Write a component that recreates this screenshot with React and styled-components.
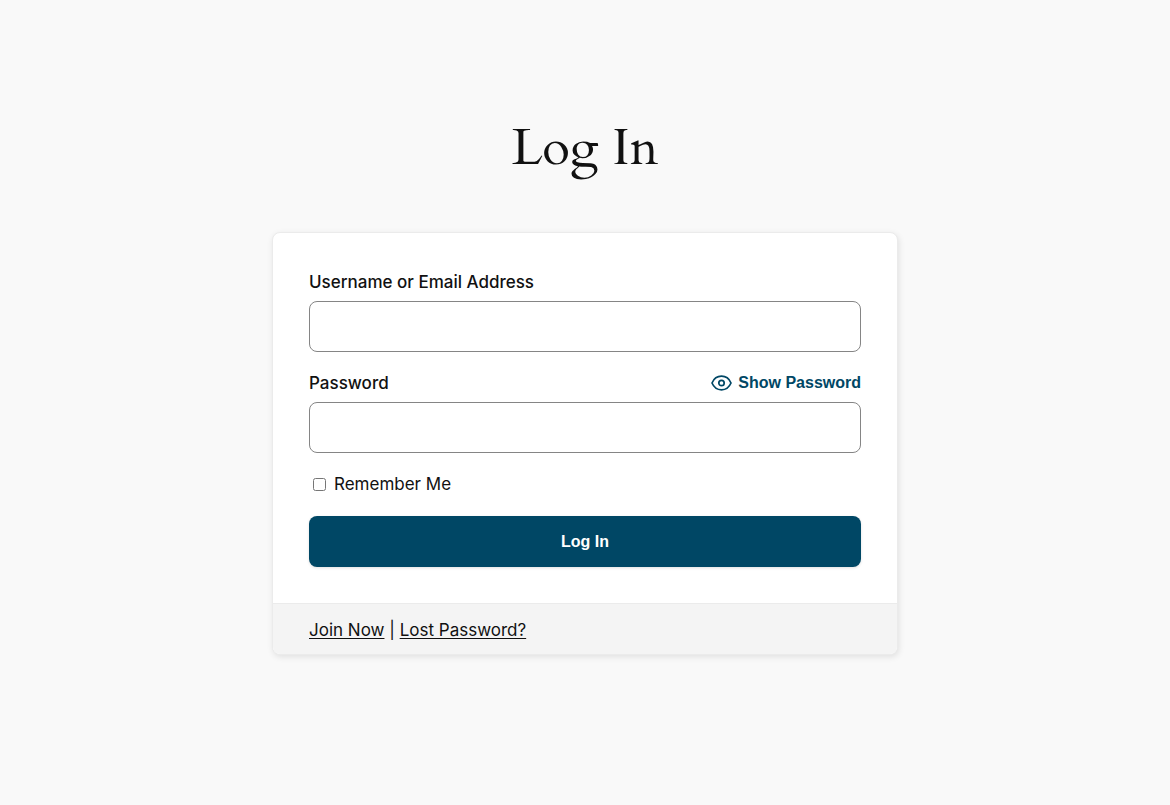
import React, { useState } from "react";
import styled, { createGlobalStyle } from "styled-components";

const GlobalStyle = createGlobalStyle`
  *, *::before, *::after { box-sizing: border-box; }
  body {
    margin: 0;
    background: #f9f9f9;
    color: #111;
    font: 400 17px/24px Inter, "Liberation Sans", sans-serif;
  }
`;

const Page = styled.main`
  display: flex;
  flex-direction: column;
  align-items: center;
  min-height: 100vh;
  padding: 112px 24px 48px;
`;

const Title = styled.h1`
  margin: 0 0 48px;
  color: #111;
  font: 400 51px/72px Cardo, "EB Garamond", "Liberation Serif", serif;
`;

const Card = styled.form`
  width: 100%;
  max-width: 626px;
  overflow: hidden;
  border: 1px solid #ebebeb;
  border-radius: 8px;
  background: #fff;
  box-shadow: 1px 2px 6px rgba(0, 0, 0, 0.1);
`;

const Fields = styled.div`
  display: flex;
  flex-direction: column;
  gap: 19px;
  padding: 37px 36px 36px;
`;

const Field = styled.div`
  display: flex;
  flex-direction: column;
  gap: 7px;
`;

const FieldHead = styled.div`
  display: flex;
  align-items: center;
  justify-content: space-between;
`;

const Label = styled.label`
  font-weight: 500;
`;

const TextInput = styled.input`
  width: 100%;
  height: 51px;
  padding: 0 16px;
  border: 1px solid #858585;
  border-radius: 8px;
  background: #fff;
  color: inherit;
  font: inherit;
`;

const ToggleButton = styled.button`
  display: flex;
  align-items: center;
  gap: 6px;
  padding: 0;
  border: 0;
  background: none;
  color: #004765;
  font: 700 16px/24px "Liberation Sans", sans-serif;
  cursor: pointer;
`;

const Remember = styled.label`
  display: flex;
  align-items: center;
  gap: 8px;
  padding-left: 4px;
  line-height: 25px;
`;

const Checkbox = styled.input`
  width: 13px;
  height: 13px;
  margin: 0;
`;

const Submit = styled.button`
  height: 51px;
  border: 0;
  border-radius: 8px;
  background: #004765;
  color: #fff;
  font: 700 16px/24px "Liberation Sans", sans-serif;
  box-shadow: 0 1px 3px rgba(0, 0, 0, 0.12);
  cursor: pointer;
`;

const Footer = styled.nav`
  padding: 14px 36px 12px;
  border-top: 1px solid #ebebeb;
  background: #f4f4f4;
`;

const FooterLink = styled.a`
  color: inherit;
  text-underline-offset: 2px;
`;

function EyeIcon() {
  return (
    <svg width="21" height="16" viewBox="0 0 21 16" fill="none" stroke="currentColor" strokeWidth="1.7" aria-hidden="true">
      <path d="M1 8C2.800 3.800 6.300 1.200 10.500 1.200S18.200 3.800 20 8c-1.800 4.200-5.300 6.800-9.500 6.800S2.800 12.200 1 8Z" />
      <circle cx="10.500" cy="8" r="2.700" />
    </svg>
  );
}

export default function App() {
  const [visible, setVisible] = useState(false);
  return (
    <>
      <GlobalStyle />
      <Page>
        <Title>Log In</Title>
        <Card onSubmit={(e) => e.preventDefault()}>
          <Fields>
            <Field>
              <Label htmlFor="username">Username or Email Address</Label>
              <TextInput id="username" type="text" autoComplete="username" />
            </Field>
            <Field>
              <FieldHead>
                <Label htmlFor="password">Password</Label>
                <ToggleButton type="button" onClick={() => setVisible(!visible)}>
                  <EyeIcon />
                  {visible ? "Hide Password" : "Show Password"}
                </ToggleButton>
              </FieldHead>
              <TextInput id="password" type={visible ? "text" : "password"} autoComplete="current-password" />
            </Field>
            <Remember htmlFor="remember">
              <Checkbox id="remember" type="checkbox" />
              Remember Me
            </Remember>
            <Submit type="submit">Log In</Submit>
          </Fields>
          <Footer>
            <FooterLink href="#join">Join Now</FooterLink> | <FooterLink href="#lost">Lost Password?</FooterLink>
          </Footer>
        </Card>
      </Page>
    </>
  );
}
